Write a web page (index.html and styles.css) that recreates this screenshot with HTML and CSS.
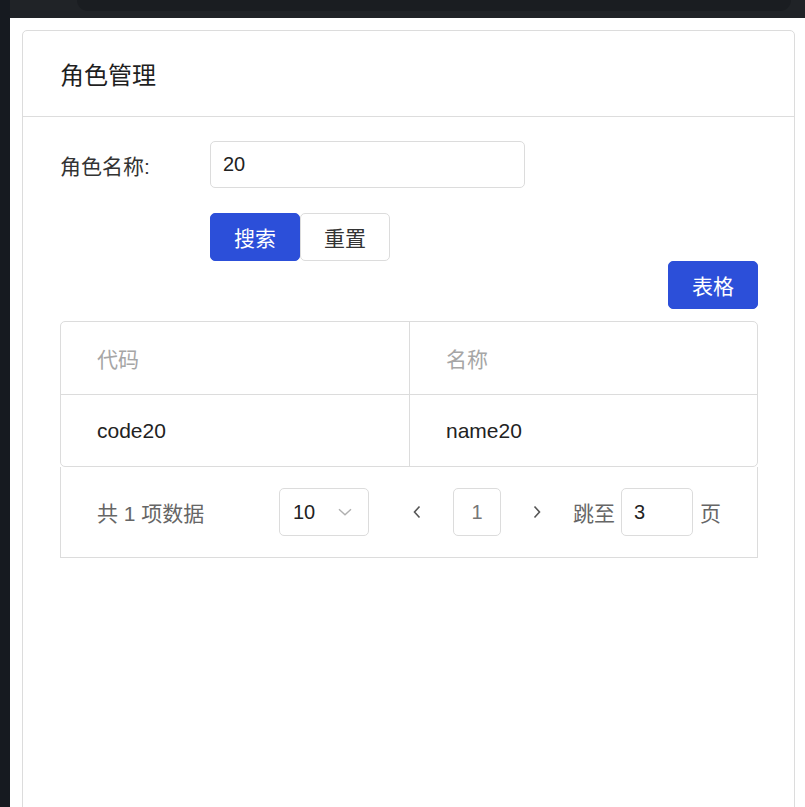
FILE: index.html
```html
<!DOCTYPE html>
<html lang="zh-CN">
<head>
<meta charset="utf-8">
<title>角色管理</title>
<link rel="stylesheet" href="styles.css">
</head>
<body>
<div class="shell">
  <div class="strip"></div>
  <div class="main">
    <div class="topbar"><div class="addr"></div></div>
    <div class="content">
      <div class="card">
        <div class="card-head">角色管理</div>
        <div class="card-body">
          <div class="form-row">
            <label class="form-label">角色名称:</label>
            <div class="input">20</div>
          </div>
          <div class="btn-row">
            <button class="btn btn-primary">搜索</button>
            <button class="btn btn-default">重置</button>
          </div>
          <div class="toolbar">
            <button class="btn btn-primary">表格</button>
          </div>
          <div class="table">
            <div class="tr th">
              <div class="td">代码</div>
              <div class="td">名称</div>
            </div>
            <div class="tr">
              <div class="td">code20</div>
              <div class="td">name20</div>
            </div>
          </div>
          <div class="pager">
            <div class="total">共 1 项数据</div>
            <div class="select">
              <span>10</span>
              <svg class="chev-down" width="14" height="8" viewBox="0 0 14 8"><path d="M1 1.2 L7 6.8 L13 1.2" fill="none" stroke="#b0b0b0" stroke-width="1.4"/></svg>
            </div>
            <div class="nav prev">
              <svg width="10" height="14" viewBox="0 0 10 14"><path d="M7.5 1.5 L2.5 7 L7.5 12.5" fill="none" stroke="#555" stroke-width="1.6"/></svg>
            </div>
            <div class="page">1</div>
            <div class="nav next">
              <svg width="10" height="14" viewBox="0 0 10 14"><path d="M2.5 1.5 L7.5 7 L2.5 12.5" fill="none" stroke="#555" stroke-width="1.6"/></svg>
            </div>
            <span class="jump">跳至</span>
            <div class="jump-input">3</div>
            <span class="unit">页</span>
          </div>
        </div>
      </div>
    </div>
  </div>
</div>
</body>
</html>
```

FILE: styles.css
```css
html, body {
  margin: 0;
  padding: 0;
  height: 100%;
  background: #ffffff;
  overflow: hidden;
}
body {
  font-family: "Liberation Sans", "Noto Sans CJK SC", sans-serif;
  color: #222;
}
.shell {
  display: flex;
  height: 100%;
}
.strip {
  width: 10px;
  flex: none;
  background: #161a20;
}
.main {
  flex: 1;
  display: flex;
  flex-direction: column;
  min-width: 0;
}
.topbar {
  height: 18px;
  flex: none;
  background: #202327;
}
.addr {
  margin-left: 67px;
  width: 714px;
  height: 11px;
  background: #1a1d21;
  border-radius: 0 0 13px 13px;
}
.content {
  flex: 1;
  min-height: 0;
  overflow: hidden;
  padding: 12px 10px 0 12px;
}
.card {
  border: 1px solid #dcdcdc;
  border-radius: 5px;
  height: 900px;
  background: #fff;
}
.card-head {
  height: 85px;
  display: flex;
  align-items: center;
  padding: 0 37px;
  font-size: 24px;
  color: #1f1f1f;
  border-bottom: 1px solid #dddddd;
}
.card-body {
  padding: 24px 36px 0 37px;
}
.form-row {
  display: flex;
  align-items: center;
  height: 47px;
}
.form-label {
  width: 150px;
  font-size: 21px;
  color: #333;
  flex: none;
}
.input {
  box-sizing: border-box;
  width: 315px;
  height: 47px;
  border: 1px solid #dcdcdc;
  border-radius: 5px;
  display: flex;
  align-items: center;
  padding-left: 12px;
  font-size: 20px;
  color: #222;
}
.btn-row {
  display: flex;
  margin-top: 25px;
  padding-left: 150px;
}
.btn {
  box-sizing: border-box;
  width: 90px;
  height: 48px;
  border-radius: 5px;
  font-family: inherit;
  font-size: 21px;
  padding: 0;
  margin: 0;
  cursor: pointer;
}
.btn-primary {
  background: #2c4fd9;
  border: 1px solid #2c4fd9;
  color: #fff;
}
.btn-default {
  background: #fff;
  border: 1px solid #dcdcdc;
  color: #333;
}
.toolbar {
  display: flex;
  justify-content: flex-end;
}
.table {
  margin-top: 12px;
  border: 1px solid #dcdcdc;
  border-radius: 5px;
}
.tr {
  display: grid;
  grid-template-columns: 1fr 1fr;
  height: 71px;
  box-sizing: border-box;
}
.th {
  height: 73px;
  border-bottom: 1px solid #dcdcdc;
  color: #a6a6a6;
}
.td {
  display: flex;
  align-items: center;
  padding-left: 36px;
  font-size: 21px;
}
.td + .td {
  border-left: 1px solid #dcdcdc;
}
.pager {
  box-sizing: border-box;
  height: 91px;
  border: 1px solid #dcdcdc;
  border-top: none;
  display: flex;
  align-items: center;
  padding-left: 36px;
  color: #666;
  font-size: 21px;
}
.total {
  width: 182px;
  flex: none;
}
.select {
  box-sizing: border-box;
  width: 90px;
  height: 48px;
  border: 1px solid #dcdcdc;
  border-radius: 5px;
  display: flex;
  align-items: center;
  padding-left: 13px;
  color: #222;
  font-size: 20px;
}
.chev-down {
  margin-left: 23px;
}
.nav {
  width: 48px;
  height: 48px;
  display: flex;
  align-items: center;
  justify-content: center;
}
.prev {
  margin-left: 24px;
}
.page {
  box-sizing: border-box;
  width: 48px;
  height: 48px;
  margin-left: 12px;
  border: 1px solid #dcdcdc;
  border-radius: 5px;
  display: flex;
  align-items: center;
  justify-content: center;
  color: #777;
  font-size: 20px;
}
.next {
  margin-left: 12px;
}
.jump {
  margin-left: 12px;
}
.jump-input {
  box-sizing: border-box;
  width: 72px;
  height: 48px;
  margin-left: 6px;
  border: 1px solid #dcdcdc;
  border-radius: 5px;
  display: flex;
  align-items: center;
  padding-left: 12px;
  color: #222;
  font-size: 20px;
}
.unit {
  margin-left: 7px;
}
```
